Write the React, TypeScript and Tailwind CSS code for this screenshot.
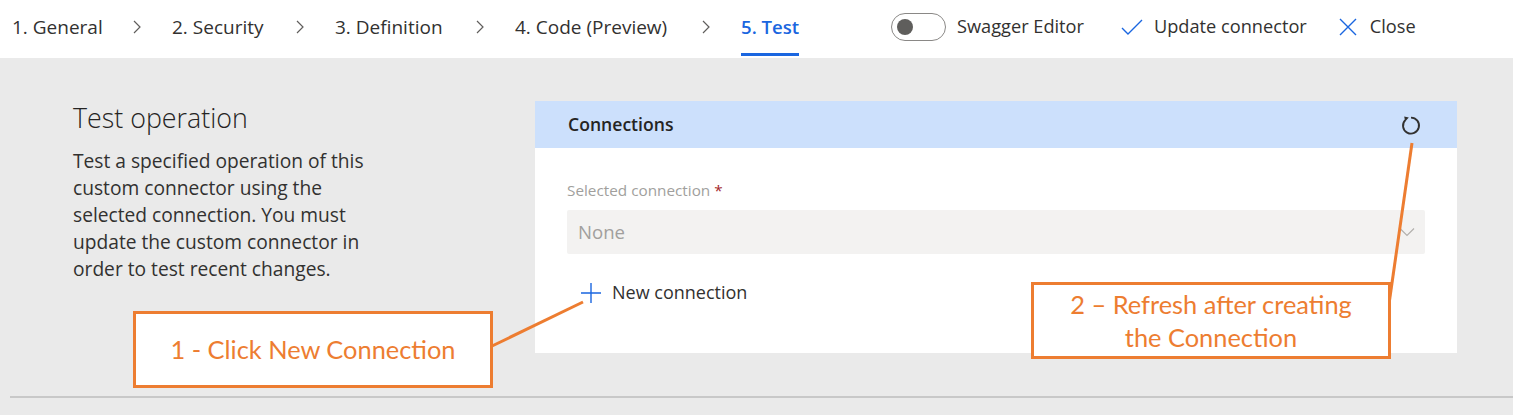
import React from 'react';

const tabs = [
  { label: '1. General', w: 'w-[89px]' },
  { label: '2. Security', w: 'w-[92px]' },
  { label: '3. Definition', w: 'w-[109px]' },
  { label: '4. Code (Preview)', w: 'w-[155px]' },
];

const Chevron = () => (
  <svg width="10" height="16" viewBox="0 0 10 16" className="shrink-0">
    <path d="M2 2l6 6-6 6" fill="none" stroke="#605e5c" strokeWidth="1.2" />
  </svg>
);

const App: React.FC = () => {
  return (
    <div className="relative h-[415px] w-full overflow-hidden bg-[#eaeaea] font-['Open_Sans',sans-serif] text-[#323130]">
      {/* top bar */}
      <header className="flex h-[58px] items-center bg-white pl-3">
        <nav className="flex h-full items-center gap-[30.5px] pb-[4px]">
          {tabs.map((t) => (
            <React.Fragment key={t.label}>
              <span className={`${t.w} whitespace-nowrap text-[19px]`}>{t.label}</span>
              <Chevron />
            </React.Fragment>
          ))}
          <span className="relative -mb-[4px] flex h-full w-[58px] items-center whitespace-nowrap pb-[4px] text-[18.6px] font-semibold text-[#1a66e0]">
            5. Test
            <span className="absolute bottom-0 left-0 h-[3px] w-full bg-[#1a66e0]" />
          </span>
        </nav>
        <div className="flex flex-1 items-center pb-[4px] pl-[92px]">
          <span className="flex h-[28px] w-[55px] items-center rounded-full border border-[#8a8886] px-[5px]">
            <span className="h-[16px] w-[16px] rounded-full bg-[#5f5e5c]" />
          </span>
          <span className="ml-[11px] text-[18.2px]">Swagger Editor</span>
          <svg width="24" height="20" viewBox="0 0 24 20" className="ml-[36px]">
            <path d="M2 11l6 6L22 3" fill="none" stroke="#1a66e0" strokeWidth="1.4" />
          </svg>
          <span className="ml-[10px] text-[18.2px]">Update connector</span>
          <svg width="20" height="20" viewBox="0 0 20 20" className="ml-[31px]">
            <path d="M2 2l16 16M18 2L2 18" fill="none" stroke="#1a66e0" strokeWidth="1.4" />
          </svg>
          <span className="ml-[12px] text-[18.2px]">Close</span>
        </div>
      </header>

      {/* body */}
      <main className="flex pt-[43px]">
        <section className="w-[535px] shrink-0 pl-[73px]">
          <h1 className="text-[26.8px] font-light leading-[34px] text-[#252423]">Test operation</h1>
          <p className="mt-[12px] text-[19.2px] leading-[27px] text-[#323130]">
            Test a specified operation of this
            <br />
            custom connector using the
            <br />
            selected connection. You must
            <br />
            update the custom connector in
            <br />
            order to test recent changes.
          </p>
        </section>

        <section className="h-[252px] w-[922px] shrink-0 bg-white">
          <div className="flex h-[47px] items-center justify-between bg-[#cce0fc] pl-[33px] pr-[34px]">
            <span className="text-[17.6px] font-semibold text-[#252423]">Connections</span>
            <svg width="24" height="24" viewBox="0 0 24 24">
              <path
                d="M12 4.6A8 8 0 1 1 6.2 7.1"
                fill="none"
                stroke="#323130"
                strokeWidth="1.9"
              />
              <path d="M5.2 3.6l4.6 0.8-3.6 4z" fill="#323130" />
            </svg>
          </div>
          <div className="px-[32px] pt-[30px]">
            <label className="text-[15.3px] text-[#a19f9d]">
              Selected connection <span className="text-[#a4262c]">*</span>
            </label>
            <div className="mt-[8px] flex h-[44px] items-center justify-between rounded-[2px] bg-[#f3f2f1] pl-[11px] pr-[10px]">
              <span className="text-[18.6px] text-[#a19f9d]">None</span>
              <svg width="16" height="10" viewBox="0 0 16 10">
                <path d="M1 1.5l7 7 7-7" fill="none" stroke="#b3b0ad" strokeWidth="1.2" />
              </svg>
            </div>
            <div className="mt-[25px] flex items-center pl-[13px]">
              <svg width="22" height="22" viewBox="0 0 22 22">
                <path d="M11 1v20M1 11h20" fill="none" stroke="#1a66e0" strokeWidth="1.4" />
              </svg>
              <span className="ml-[10px] text-[18px] text-[#323130]">New connection</span>
            </div>
          </div>
        </section>
      </main>

      <div className="absolute left-[10px] right-0 top-[396px] h-[2px] bg-[#c8c8c8]" />

      {/* annotation arrows */}
      <svg className="pointer-events-none absolute left-0 top-0" width="1513" height="415">
        <line x1="490" y1="347" x2="583" y2="302" stroke="#ed7d31" strokeWidth="3" />
        <line x1="1412" y1="143" x2="1387" y2="318" stroke="#ed7d31" strokeWidth="3" />
      </svg>

      {/* annotation boxes */}
      <div className="absolute left-[133px] top-[311px] flex h-[77px] w-[360px] items-center justify-center border-[3px] border-[#ed7d31] bg-white font-['Lato',sans-serif] text-[25.4px] text-[#ed7d31]">
        1 - Click New Connection
      </div>
      <div className="absolute left-[1031px] top-[282px] flex h-[77px] w-[360px] flex-col items-center justify-center border-[3px] border-[#ed7d31] bg-white font-['Lato',sans-serif] text-[25.4px] leading-[33px] text-[#ed7d31]">
        <span>2 – Refresh after creating</span>
        <span>the Connection</span>
      </div>
    </div>
  );
};

export default App;
